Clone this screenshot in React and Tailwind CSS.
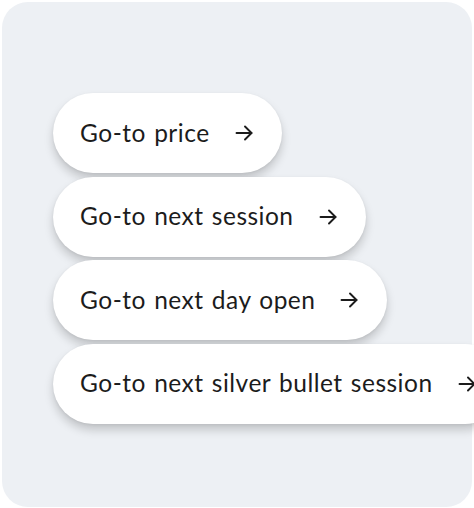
import React from "react";

const items = [
  "Go-to price",
  "Go-to next session",
  "Go-to next day open",
  "Go-to next silver bullet session",
];

function Arrow() {
  return (
    <svg
      width="18"
      height="16"
      viewBox="0 0 18 16"
      fill="none"
      stroke="#1c1c1c"
      strokeWidth="1.9"
      strokeLinecap="round"
      strokeLinejoin="round"
      className="shrink-0"
    >
      <path d="M1.5 8h15" />
      <path d="M10 1.5 16.5 8 10 14.5" />
    </svg>
  );
}

function GoToPill({ label }) {
  return (
    <div className="flex h-[80px] shrink-0 items-center gap-[25px] whitespace-nowrap rounded-full bg-white pl-[27px] pr-[29px] shadow-[0_6px_10px_rgba(0,0,0,0.18),0_1px_3px_rgba(0,0,0,0.06)]">
      <span className="text-[24.5px] tracking-[0.5px] [word-spacing:1.5px] text-[#1c1c1c]">
        {label}
      </span>
      <Arrow />
    </div>
  );
}

export default function App() {
  return (
    <div
      className="h-[508px] w-[474px] overflow-hidden bg-white p-[2px]"
      style={{ fontFamily: "Lato, 'Open Sans', sans-serif" }}
    >
      <div className="flex h-[505px] w-[470px] flex-col items-start gap-[3.5px] rounded-[26px] bg-[#edf0f4] pl-[51px] pt-[91px]">
        {items.map((label) => (
          <GoToPill key={label} label={label} />
        ))}
      </div>
    </div>
  );
}
